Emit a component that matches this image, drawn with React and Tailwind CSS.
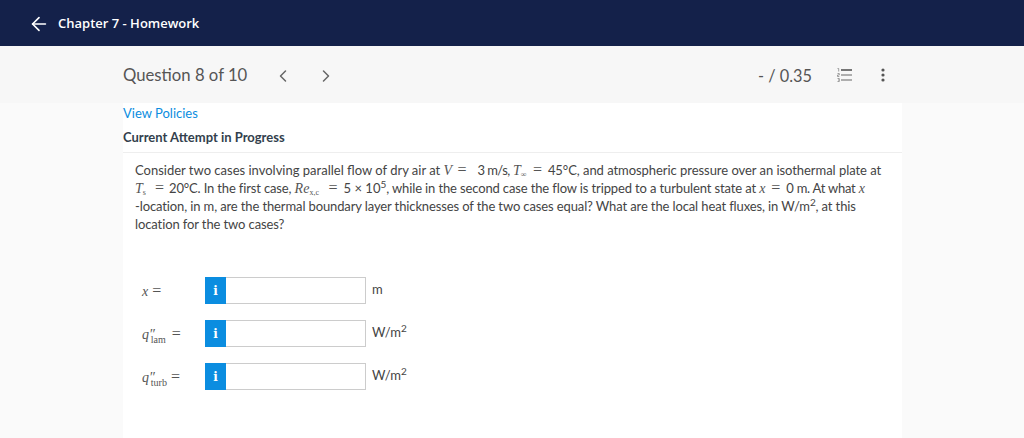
import { ArrowLeft, ChevronLeft, ChevronRight } from "lucide-react"

const LATO = "font-['Lato',sans-serif]"

// one math token in the question text, in a box of the width it takes in the picture
function M({ children, sub, w }) {
  return (
    <span className={`${w} inline-block font-['Liberation_Serif',serif] italic text-[14px] leading-none text-[#555]`}>
      {children}
      {sub && <sub className="text-[8px] not-italic">{sub}</sub>}
    </span>
  )
}

function Eq({ w }) {
  return (
    <span className={`${w} inline-block text-left font-['Liberation_Serif',serif] text-[16px] leading-none text-[#555]`}>=</span>
  )
}

function Answer({ label, unit, sup, gap }) {
  return (
    <div className="flex items-center h-[27px]">
      <div className={`w-[82px] pl-[19px] flex items-center ${gap} font-['Liberation_Serif',serif] text-[#555] whitespace-nowrap pt-[1px]`}>
        {label}
        <span className="text-[16px]">=</span>
      </div>
      <div className="flex w-[161px] h-[27px] border border-[#ccc] bg-white">
        <div className="w-[21px] h-[27px] shrink-0 bg-[#0b8de0] flex items-center justify-center text-white text-[12px] font-bold font-['DejaVu_Serif',serif] -ml-px -mt-px">
          i
        </div>
      </div>
      <div className="ml-[6px] text-[13px] text-[#444] leading-none -mt-[3px]">
        {unit}
        {sup && <sup className="text-[10px]">2</sup>}
      </div>
    </div>
  )
}

function Q({ sub }) {
  return (
    <span className="italic text-[14px]">
      q″<sub className="not-italic text-[10px] top-[4px] -ml-[4px]">{sub}</sub>
    </span>
  )
}

export default function App() {
  return (
    <div className={`${LATO} w-[1024px] h-[438px] overflow-hidden bg-[#fafafa]`}>

      {/* HEADER */}
      <div className="h-[46px] bg-[#14214a] flex items-center pl-[28px] pt-[1px] text-white">
        <ArrowLeft className="w-[22px] h-[22px]" strokeWidth={1.8} />
        <span className="ml-[8px] text-[13px] font-semibold font-['Open_Sans',sans-serif]">Chapter 7 - Homework</span>
      </div>

      {/* QUESTION BAR */}
      <div className="h-[57px] bg-[#f7f7f7] flex items-center pl-[123px] pr-[139px] text-[#555] pt-[3px]">
        <span className="text-[16.7px] w-[150px]">Question 8 of 10</span>
        <ChevronLeft className="w-[20px] h-[20px] text-[#666]" strokeWidth={1.8} />
        <ChevronRight className="w-[20px] h-[20px] ml-[23px] text-[#666]" strokeWidth={1.8} />
        <span className="ml-auto text-[16.3px]">- / 0.35</span>
        <svg className="ml-[25px] -mt-[3px]" width="16" height="14" viewBox="0 0 16 14" fill="none">
          <path d="M4 2h11" stroke="#555" strokeWidth="1.6" />
          <path d="M4 7h11M4 12h11" stroke="#666" strokeWidth="1.2" />
          <path d="M0.5 0.5h1.2v3M0.5 5.5h1.8v1.5H0.5v1.5h1.8M0.5 10.5h1.8v3H0.5M1 12h1.3" stroke="#888" strokeWidth="0.8" />
        </svg>
        <svg className="ml-[28px] -mt-[3px]" width="4" height="14" viewBox="0 0 4 14" fill="#555">
          <circle cx="2" cy="2" r="1.6" />
          <circle cx="2" cy="7" r="1.6" />
          <circle cx="2" cy="12" r="1.6" />
        </svg>
      </div>

      {/* CONTENT */}
      <div className="ml-[123px] w-[779px] h-[335px] bg-white">
        <div className="h-[50px] border-b border-[#eee] pt-[1px]">
          <div className="text-[13px] leading-[18px] text-[#0b8de0]">View Policies</div>
          <div className="mt-[6px] text-[13px] leading-[18px] font-bold text-[#333f4d]">Current Attempt in Progress</div>
        </div>

        <div className="pl-[12px] pt-[8px] text-[13px] text-[#444] whitespace-nowrap">
          <div className="h-[18px] leading-[18px]">
            Consider two cases involving parallel flow of dry air at <M w="w-[14px]">V</M><Eq w="w-[20px]" /><span className="tracking-[-0.6px]">3 m/s,</span> <M w="w-[20px]" sub="∞">T</M><Eq w="w-[15px]" /><span className="tracking-[-0.05px]">45°C, and atmospheric pressure over an isothermal plate at</span>
          </div>
          <div className="h-[18px] leading-[18px]">
            <M w="w-[20px]" sub="s">T</M><Eq w="w-[14px]" /><span className="tracking-[-0.15px]">20°C. In the first case,</span> <M w="w-[34px]" sub="x,c">Re</M><Eq w="w-[15px]" />5 × 10<sup className="text-[10px]">5</sup><span className="tracking-[-0.13px]">, while in the second case the flow is tripped to a turbulent state at</span> <M w="w-[12px]">x</M><Eq w="w-[15px]" /><span className="tracking-[-0.25px]">0 m. At what</span> <M w="w-[12px]">x</M>
          </div>
          <div className="h-[18px] leading-[18px] tracking-[-0.12px]">
            -location, in m, are the thermal boundary layer thicknesses of the two cases equal? What are the local heat fluxes, in W/m<sup className="text-[10px]">2</sup>, at this
          </div>
          <div className="h-[18px] leading-[18px] tracking-[-0.11px]">location for the two cases?</div>
        </div>

        <div className="mt-[44px] flex flex-col gap-[16px]">
          <Answer gap="gap-[4px]" label={<span className="italic text-[14px]">x</span>} unit="m" />
          <Answer gap="gap-[6px]" label={<Q sub="lam" />} unit="W/m" sup />
          <Answer gap="gap-[4px]" label={<Q sub="turb" />} unit="W/m" sup />
        </div>
      </div>
    </div>
  )
}
